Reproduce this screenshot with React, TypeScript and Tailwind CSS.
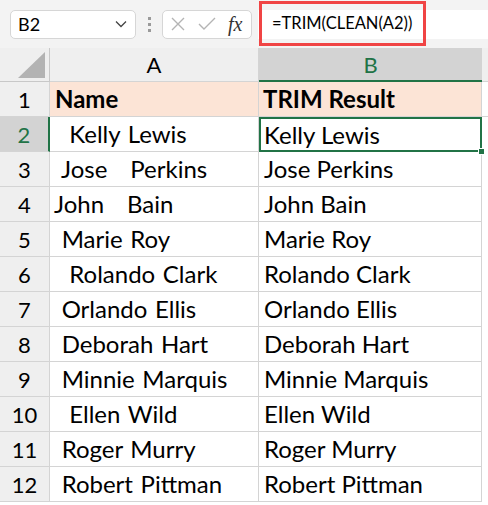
import React from "react";

const rows: [string, string][] = [
  ["  Kelly Lewis", "Kelly Lewis"],
  [" Jose   Perkins", "Jose Perkins"],
  ["John   Bain", "John Bain"],
  [" Marie Roy", "Marie Roy"],
  ["  Rolando Clark", "Rolando Clark"],
  [" Orlando Ellis", "Orlando Ellis"],
  [" Deborah Hart", "Deborah Hart"],
  [" Minnie Marquis", "Minnie Marquis"],
  ["  Ellen Wild", "Ellen Wild"],
  [" Roger Murry", "Roger Murry"],
  [" Robert Pittman", "Robert Pittman"],
];

const FormulaBar = () => (
  <div className="h-[48px] bg-[#f3f3f3] flex items-center relative">
    <div className="ml-[10px] w-[126px] h-[29px] bg-white border border-[#d6d6d6] rounded-[5px] flex items-center justify-between px-[7px]">
      <span className="text-[18px] text-black">B2</span>
      <svg width="12" height="8" viewBox="0 0 12 8" className="mr-[1px]">
        <path d="M1 1.5 L6 6.5 L11 1.5" fill="none" stroke="#444" strokeWidth="1.3" />
      </svg>
    </div>
    <div className="w-[26px] flex flex-col items-center gap-[3px]">
      <span className="w-[3px] h-[3px] bg-[#9a9a9a]" />
      <span className="w-[3px] h-[3px] bg-[#9a9a9a]" />
      <span className="w-[3px] h-[3px] bg-[#9a9a9a]" />
    </div>
    <div className="w-[90px] h-[29px] bg-white border border-[#d6d6d6] rounded-[5px] flex items-center px-[7px] gap-[12px]">
      <svg width="16" height="16" viewBox="0 0 16 16">
        <path d="M2 2 L14 14 M14 2 L2 14" stroke="#b4b4b4" strokeWidth="1.4" />
      </svg>
      <svg width="18" height="14" viewBox="0 0 18 14">
        <path d="M1 7 L6 12 L17 1" fill="none" stroke="#b4b4b4" strokeWidth="1.4" />
      </svg>
      <span className="text-[20px] italic text-[#333] leading-none" style={{ fontFamily: '"Liberation Serif", serif' }}>
        fx
      </span>
    </div>
    <div className="ml-[6px] flex-1 h-[29px] bg-white flex items-center" />
    <div className="absolute left-[259px] top-[1px] w-[167px] h-[45px] border-[3px] border-[#f04444] flex items-center pl-[10px]">
      <span className="text-[16.5px] text-black">=TRIM(CLEAN(A2))</span>
    </div>
  </div>
);

export default function App() {
  return (
    <div className="w-[488px] h-[505px] bg-white overflow-hidden" style={{ fontFamily: 'Lato, "Liberation Sans", sans-serif' }}>
      <FormulaBar />
      <div className="grid grid-cols-[50px_209px_223px_6px] grid-rows-[34px_repeat(12,35px)] text-black">
        {/* header row */}
        <div className="bg-[#efefef] border-r border-b border-[#c8c8c8] relative">
          <svg width="28" height="26" viewBox="0 0 28 26" className="absolute right-[3px] bottom-[3px]">
            <polygon points="27,0 27,26 0,26" fill="#b3b3b3" />
          </svg>
        </div>
        <div className="bg-[#efefef] border-r border-b border-[#d4d4d4] flex items-center justify-center text-[22px]">A</div>
        <div className="bg-[#d3d3d3] border-b-2 border-[#217346] flex items-center justify-center text-[22px] text-[#217346]">B</div>
        <div className="bg-[#efefef] border-b border-[#d4d4d4]" />

        {/* row 1 */}
        <div className="bg-[#efefef] border-r border-b border-[#d4d4d4] flex items-center justify-center text-[22px]">1</div>
        <div className="bg-[#fce4d6] border-r border-b border-[#d4d4d4] flex items-center pl-[5px] text-[24px] font-bold">Name</div>
        <div className="bg-[#fce4d6] border-r border-b border-[#d4d4d4] flex items-center pl-[4px] text-[24px] font-bold">TRIM Result</div>
        <div className="border-b border-[#d4d4d4]" />

        {rows.map(([a, b], i) => {
          const n = i + 2;
          const sel = n === 2;
          return (
            <React.Fragment key={n}>
              <div
                className={
                  sel
                    ? "bg-[#d3d3d3] border-r-2 border-r-[#217346] border-b border-b-[#d4d4d4] flex items-center justify-center text-[22px] text-[#217346]"
                    : "bg-[#efefef] border-r border-b border-[#d4d4d4] flex items-center justify-center text-[22px]"
                }
              >
                {n}
              </div>
              <div className="border-r border-b border-[#d4d4d4] flex items-center pl-[4px] text-[24px] whitespace-pre [word-spacing:1.5px]">{a}</div>
              <div
                className={
                  sel
                    ? "relative border-2 border-[#217346] flex items-center pl-[3px] text-[24px]"
                    : "border-r border-b border-[#d4d4d4] flex items-center pl-[5px] text-[24px]"
                }
              >
                {b}
                {sel && <span className="absolute right-[-5px] bottom-[-5px] w-[7px] h-[7px] bg-[#217346] border border-white" />}
              </div>
              <div />
            </React.Fragment>
          );
        })}
      </div>
    </div>
  );
}
